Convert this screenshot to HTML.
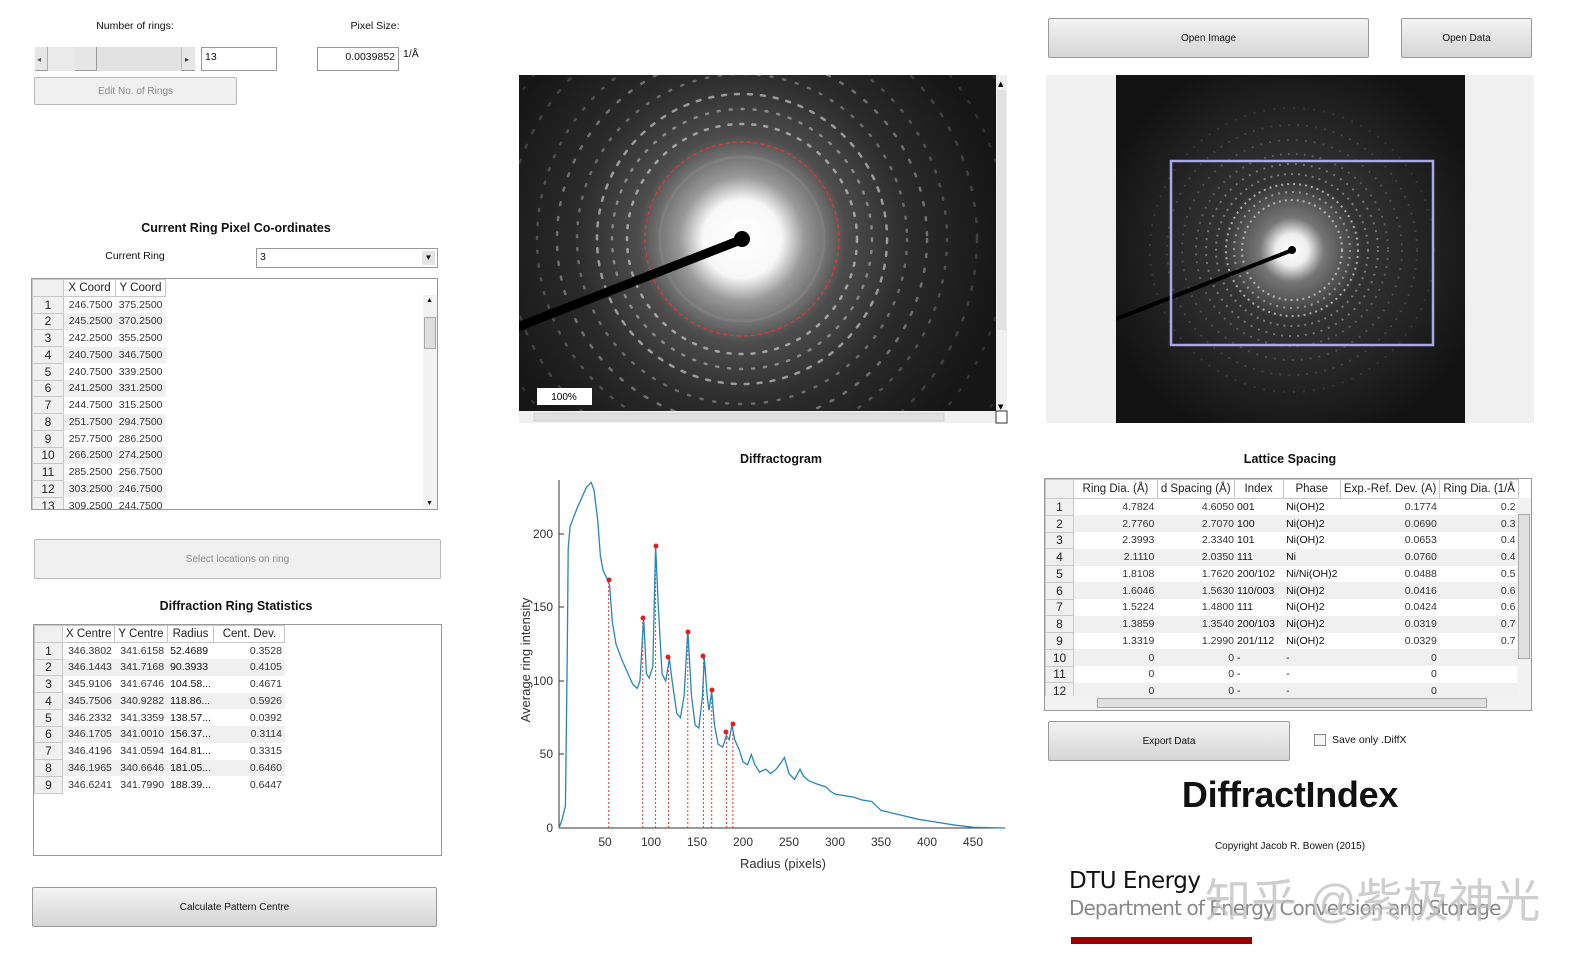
<!DOCTYPE html>
<html><head><meta charset="utf-8"><style>
*{box-sizing:border-box;margin:0;padding:0}
body{width:1593px;height:967px;background:#fff;position:relative;overflow:hidden;font-family:"Liberation Sans",Arial,sans-serif;color:#111}
.a{position:absolute}
.lbl{font-size:10.5px;position:absolute;white-space:nowrap}
.c{transform:translateX(-50%)}
.btn{position:absolute;border:1px solid #9a9a9a;border-radius:2px;background:linear-gradient(#f4f4f4,#e4e4e4 50%,#d6d6d6);font-size:10px;display:flex;align-items:center;justify-content:center;color:#111}
.btn.dis{background:#f0f0f0;color:#8a8a8a;border-color:#b8b8b8}
.box{position:absolute;border:1px solid #9a9a9a;background:#fff;font-size:10.5px;padding:3px 3px}
.title{position:absolute;font-weight:bold;font-size:12.5px;white-space:nowrap;transform:translateX(-50%)}
table{border-collapse:collapse;font-size:10.5px;position:absolute}
td,th{height:16.75px;padding:0 3px;white-space:nowrap;font-weight:normal}
th{background:#fff;border:1px solid #c8c8c8;font-size:11.5px;color:#222}
td.n{background:#f0f0f0;border:1px solid #c8c8c8;text-align:center;font-size:12px;color:#222}
td.r{text-align:right;color:#333}
tr.z td:not(.n){background:#f0f0f0}
.tw{position:absolute;border:1px solid #9a9a9a;background:#fff;overflow:hidden}
</style></head><body>

<div class="lbl c" style="left:135px;top:20px">Number of rings:</div>
<div class="lbl c" style="left:375px;top:20px">Pixel Size:</div>
<div class="a" style="left:35px;top:47px;width:160px;height:24px;background:#e6e6e6;border-bottom:1px solid #999">
 <div class="a" style="left:2px;top:8px;font-size:8px;color:#555">◂</div>
 <div class="a" style="left:12px;top:0;width:28px;height:24px;background:#eaeaea;border-left:1px solid #aaa"></div>
 <div class="a" style="left:61px;top:0;width:86px;height:24px;background:#e2e2e2;border-left:1px solid #999;border-right:1px solid #bbb"></div>
 <div class="a" style="left:150px;top:8px;font-size:8px;color:#333">▸</div>
</div>
<div class="box" style="left:201px;top:47px;width:76px;height:24px">13</div>
<div class="box" style="left:317px;top:47px;width:82px;height:24px;text-align:right">0.0039852</div>
<div class="lbl" style="left:403px;top:48px">1/Å</div>
<div class="btn dis" style="left:34px;top:77px;width:203px;height:28px">Edit No. of Rings</div>

<div class="title" style="left:236px;top:221px">Current Ring Pixel Co-ordinates</div>
<div class="lbl c" style="left:135px;top:250px">Current Ring</div>
<div class="box" style="left:256px;top:248px;width:182px;height:20px;padding:2px 3px">3<span class="a" style="right:2px;top:2px;width:13px;height:14px;background:#e4e4e4;font-size:8px;text-align:center;line-height:14px">▼</span></div>

<div class="tw" style="left:31px;top:278px;width:407px;height:232px">
<table style="left:0;top:0">
<tr><th style="width:31px;background:#f0f0f0"></th><th style="width:52px">X Coord</th><th style="width:50px">Y Coord</th></tr>
<tr><td class="n">1</td><td class="r">246.7500</td><td class="r">375.2500</td></tr>
<tr class="z"><td class="n">2</td><td class="r">245.2500</td><td class="r">370.2500</td></tr>
<tr><td class="n">3</td><td class="r">242.2500</td><td class="r">355.2500</td></tr>
<tr class="z"><td class="n">4</td><td class="r">240.7500</td><td class="r">346.7500</td></tr>
<tr><td class="n">5</td><td class="r">240.7500</td><td class="r">339.2500</td></tr>
<tr class="z"><td class="n">6</td><td class="r">241.2500</td><td class="r">331.2500</td></tr>
<tr><td class="n">7</td><td class="r">244.7500</td><td class="r">315.2500</td></tr>
<tr class="z"><td class="n">8</td><td class="r">251.7500</td><td class="r">294.7500</td></tr>
<tr><td class="n">9</td><td class="r">257.7500</td><td class="r">286.2500</td></tr>
<tr class="z"><td class="n">10</td><td class="r">266.2500</td><td class="r">274.2500</td></tr>
<tr><td class="n">11</td><td class="r">285.2500</td><td class="r">256.7500</td></tr>
<tr class="z"><td class="n">12</td><td class="r">303.2500</td><td class="r">246.7500</td></tr>
<tr><td class="n">13</td><td class="r">309.2500</td><td class="r">244.7500</td></tr>
</table>
<div class="a" style="right:0;top:16px;width:14px;height:214px;background:#f2f2f2"><div class="a" style="left:1px;top:22px;width:12px;height:32px;background:#ddd;border:1px solid #aaa"></div><div class="a" style="left:3px;top:2px;font-size:7px">▲</div><div class="a" style="left:3px;bottom:2px;font-size:7px">▼</div></div>
</div>

<div class="btn dis" style="left:34px;top:539px;width:407px;height:40px">Select locations on ring</div>
<div class="title" style="left:236px;top:599px">Diffraction Ring Statistics</div>
<div class="tw" style="left:33px;top:624px;width:409px;height:232px">
<table style="left:0;top:0">
<tr><th style="width:28px;background:#f0f0f0"></th><th style="width:51px">X Centre</th><th style="width:51px">Y Centre</th><th style="width:42px">Radius</th><th style="width:71px">Cent. Dev.</th></tr>
<tr><td class="n">1</td><td class="r">346.3802</td><td class="r">341.6158</td><td>52.4689</td><td class="r">0.3528</td></tr>
<tr class="z"><td class="n">2</td><td class="r">346.1443</td><td class="r">341.7168</td><td>90.3933</td><td class="r">0.4105</td></tr>
<tr><td class="n">3</td><td class="r">345.9106</td><td class="r">341.6746</td><td>104.58...</td><td class="r">0.4671</td></tr>
<tr class="z"><td class="n">4</td><td class="r">345.7506</td><td class="r">340.9282</td><td>118.86...</td><td class="r">0.5926</td></tr>
<tr><td class="n">5</td><td class="r">346.2332</td><td class="r">341.3359</td><td>138.57...</td><td class="r">0.0392</td></tr>
<tr class="z"><td class="n">6</td><td class="r">346.1705</td><td class="r">341.0010</td><td>156.37...</td><td class="r">0.3114</td></tr>
<tr><td class="n">7</td><td class="r">346.4196</td><td class="r">341.0594</td><td>164.81...</td><td class="r">0.3315</td></tr>
<tr class="z"><td class="n">8</td><td class="r">346.1965</td><td class="r">340.6646</td><td>181.05...</td><td class="r">0.6460</td></tr>
<tr><td class="n">9</td><td class="r">346.6241</td><td class="r">341.7990</td><td>188.39...</td><td class="r">0.6447</td></tr>
</table></div>
<div class="btn" style="left:32px;top:887px;width:405px;height:40px">Calculate Pattern Centre</div>

<!-- image 1 -->
<svg class="a" style="left:519px;top:75px" width="489" height="349" viewBox="519 75 489 349">
<defs><radialGradient id="g1" cx="742" cy="239" r="260" gradientUnits="userSpaceOnUse">
<stop offset="0" stop-color="#fff"/><stop offset="0.15" stop-color="#f8f8f8"/><stop offset="0.24" stop-color="#999"/><stop offset="0.4" stop-color="#4c4c4c"/><stop offset="0.65" stop-color="#2a2a2a"/><stop offset="1" stop-color="#161616"/></radialGradient>
<clipPath id="c1"><rect x="519" y="75" width="477" height="336"/></clipPath></defs>
<rect x="519" y="75" width="477" height="336" fill="url(#g1)"/>
<g clip-path="url(#c1)" fill="none" stroke-linecap="round">
<circle cx="742" cy="239" r="82" stroke="#888" stroke-width="3" opacity=".5"/>
<circle cx="742" cy="239" r="115" stroke="#ccc" stroke-width="2.5" stroke-dasharray="3 9" opacity=".7"/>
<circle cx="742" cy="239" r="130" stroke="#bbb" stroke-width="2.5" stroke-dasharray="2 10" opacity=".6"/>
<circle cx="742" cy="239" r="145" stroke="#ddd" stroke-width="2.5" stroke-dasharray="4 9" opacity=".6"/>
<circle cx="742" cy="239" r="165" stroke="#aaa" stroke-width="2.5" stroke-dasharray="2 11" opacity=".5"/>
<circle cx="742" cy="239" r="185" stroke="#ccc" stroke-width="2.5" stroke-dasharray="3 12" opacity=".45"/>
<circle cx="742" cy="239" r="205" stroke="#999" stroke-width="2.5" stroke-dasharray="2 12" opacity=".4"/>
<circle cx="742" cy="239" r="235" stroke="#888" stroke-width="2.5" stroke-dasharray="3 13" opacity=".35"/>
<circle cx="742" cy="239" r="265" stroke="#777" stroke-width="2.5" stroke-dasharray="2 14" opacity=".3"/>
<circle cx="742" cy="239" r="300" stroke="#666" stroke-width="2.5" stroke-dasharray="2 14" opacity=".3"/>
<circle cx="742" cy="239" r="97" stroke="#e33" stroke-width="1.2" stroke-dasharray="3 4"/>
<line x1="515" y1="328" x2="738" y2="241" stroke="#000" stroke-width="9"/>
<circle cx="742" cy="239" r="8" fill="#000"/>
</g>
<rect x="537" y="388" width="55" height="17" fill="#fff"/>
<text x="564" y="400" font-size="10" text-anchor="middle" font-family="Liberation Sans">100%</text>
<rect x="996" y="75" width="11" height="336" fill="#f0f0f0"/>
<rect x="997" y="90" width="9" height="240" fill="#e2e2e2"/>
<text x="998" y="86" font-size="7" font-family="DejaVu Sans">▲</text>
<text x="998" y="409" font-size="7" font-family="DejaVu Sans">▼</text>
<rect x="519" y="411" width="488" height="12" fill="#f0f0f0"/>
<rect x="534" y="413" width="410" height="8" fill="#e0e0e0" stroke="#bbb" stroke-width=".5"/>
<rect x="996" y="411" width="11" height="12" fill="#fff" stroke="#333"/>
</svg>

<div class="title" style="left:781px;top:452px">Diffractogram</div>
<svg class="a" style="left:500px;top:460px" width="510" height="420" viewBox="500 460 510 420">
<g font-family="Liberation Sans" font-size="12" fill="#333">
<line x1="559" y1="480" x2="559" y2="828" stroke="#333"/>
<line x1="559" y1="828" x2="1005" y2="828" stroke="#333"/>
<g stroke="#333">
<line x1="559" y1="534" x2="564" y2="534"/><line x1="559" y1="607" x2="564" y2="607"/><line x1="559" y1="681" x2="564" y2="681"/><line x1="559" y1="754" x2="564" y2="754"/>
</g>
<text x="553" y="538" text-anchor="end">200</text><text x="553" y="611" text-anchor="end">150</text><text x="553" y="685" text-anchor="end">100</text><text x="553" y="758" text-anchor="end">50</text><text x="553" y="832" text-anchor="end">0</text>
<text x="605" y="846" text-anchor="middle">50</text><text x="651" y="846" text-anchor="middle">100</text><text x="697" y="846" text-anchor="middle">150</text><text x="743" y="846" text-anchor="middle">200</text><text x="789" y="846" text-anchor="middle">250</text><text x="835" y="846" text-anchor="middle">300</text><text x="881" y="846" text-anchor="middle">350</text><text x="927" y="846" text-anchor="middle">400</text><text x="973" y="846" text-anchor="middle">450</text>
<text x="783" y="868" text-anchor="middle" font-size="13">Radius (pixels)</text>
<text x="0" y="0" text-anchor="middle" font-size="13" transform="translate(530 660) rotate(-90)">Average ring intensity</text>
</g>
<g transform="translate(559 828) scale(0.92 -1.47)">
<g stroke="#e33" stroke-width="1" stroke-dasharray="2 2">
<line x1="54" y1="0" x2="54" y2="169" vector-effect="non-scaling-stroke"/><line x1="91" y1="0" x2="91" y2="143" vector-effect="non-scaling-stroke"/><line x1="105" y1="0" x2="105" y2="192" vector-effect="non-scaling-stroke"/><line x1="119" y1="0" x2="119" y2="116" vector-effect="non-scaling-stroke"/><line x1="140" y1="0" x2="140" y2="133" vector-effect="non-scaling-stroke"/><line x1="157" y1="0" x2="157" y2="117" vector-effect="non-scaling-stroke"/><line x1="166" y1="0" x2="166" y2="94" vector-effect="non-scaling-stroke"/><line x1="182" y1="0" x2="182" y2="65" vector-effect="non-scaling-stroke"/><line x1="189" y1="0" x2="189" y2="71" vector-effect="non-scaling-stroke"/>
</g>
<polyline fill="none" stroke="#2a86b8" stroke-width="1.3" vector-effect="non-scaling-stroke" points="0,0 3,5 7,15 9,120 10,190 12,205 15,210 20,218 25,225 30,232 35,235 38,230 42,210 45,185 48,175 52,170 55,165 58,140 62,125 68,115 75,105 80,98 85,95 88,100 92,143 95,105 98,102 102,110 105,192 108,150 112,105 116,100 120,115 123,100 128,78 132,75 136,90 140,135 144,90 148,70 152,68 156,90 158,116 161,90 163,80 166,93 169,70 173,57 178,55 182,63 185,60 188,70 191,60 196,53 200,45 205,43 209,50 213,43 218,38 225,40 230,37 236,40 242,45 245,48 250,37 256,33 262,40 266,35 272,32 280,30 290,28 295,25 300,23 320,21 330,19 340,18 345,15 350,12 370,9 390,6 410,4 430,2 450,0.5 485,0"/>
</g>
<g fill="#d22">
<circle cx="609" cy="580" r="2.5"/><circle cx="643" cy="618" r="2.5"/><circle cx="656" cy="546" r="2.5"/><circle cx="668" cy="657" r="2.5"/><circle cx="688" cy="632" r="2.5"/><circle cx="703" cy="656" r="2.5"/><circle cx="712" cy="690" r="2.5"/><circle cx="726" cy="732" r="2.5"/><circle cx="733" cy="724" r="2.5"/>
</g>
</svg>

<div class="btn" style="left:1048px;top:18px;width:321px;height:40px">Open Image</div>
<div class="btn" style="left:1401px;top:18px;width:131px;height:40px">Open Data</div>
<div class="a" style="left:1046px;top:75px;width:488px;height:348px;background:#f0f0f0"></div>
<svg class="a" style="left:1116px;top:75px" width="349" height="348" viewBox="1116 75 349 348">
<defs><radialGradient id="g2" cx="1292" cy="250" r="200" gradientUnits="userSpaceOnUse">
<stop offset="0" stop-color="#fff"/><stop offset="0.08" stop-color="#eee"/><stop offset="0.16" stop-color="#777"/><stop offset="0.35" stop-color="#333"/><stop offset="1" stop-color="#121212"/></radialGradient></defs>
<rect x="1116" y="75" width="349" height="348" fill="url(#g2)"/>
<g fill="none">
<circle cx="1292" cy="250" r="50" stroke="#ccc" stroke-width="2" stroke-dasharray="2 4" opacity=".8"/>
<circle cx="1292" cy="250" r="58" stroke="#bbb" stroke-width="2" stroke-dasharray="2 5" opacity=".7"/>
<circle cx="1292" cy="250" r="66" stroke="#ddd" stroke-width="2" stroke-dasharray="2 4" opacity=".7"/>
<circle cx="1292" cy="250" r="76" stroke="#aaa" stroke-width="2" stroke-dasharray="2 5" opacity=".6"/>
<circle cx="1292" cy="250" r="86" stroke="#bbb" stroke-width="2" stroke-dasharray="2 6" opacity=".5"/>
<circle cx="1292" cy="250" r="96" stroke="#999" stroke-width="2" stroke-dasharray="2 6" opacity=".45"/>
<circle cx="1292" cy="250" r="110" stroke="#888" stroke-width="2" stroke-dasharray="2 7" opacity=".4"/>
<circle cx="1292" cy="250" r="125" stroke="#777" stroke-width="2" stroke-dasharray="2 7" opacity=".35"/>
<circle cx="1292" cy="250" r="142" stroke="#666" stroke-width="2" stroke-dasharray="2 8" opacity=".3"/>
<line x1="1116" y1="319" x2="1290" y2="251" stroke="#000" stroke-width="4"/>
<circle cx="1292" cy="250" r="4" fill="#000"/>
<rect x="1171" y="161" width="262" height="184" stroke="#a8a8e8" stroke-width="2.5"/>
</g></svg>

<div class="title" style="left:1290px;top:452px">Lattice Spacing</div>
<div class="tw" style="left:1044px;top:478px;width:488px;height:233px">
<table style="left:0;top:0;width:474px">
<tr><th style="width:31px;background:#f0f0f0;height:19px"></th><th style="width:88px">Ring Dia. (Å)</th><th style="width:76px">d Spacing (Å)</th><th style="width:51px">Index</th><th style="width:55px">Phase</th><th style="width:95px">Exp.-Ref. Dev. (A)</th><th style="width:78px;text-align:left">Ring Dia. (1/Å</th></tr>
<tr><td class="n">1</td><td class="r">4.7824</td><td class="r" style="padding-right:0">4.6050</td><td>001</td><td>Ni(OH)2</td><td class="r">0.1774</td><td class="r">0.2</td></tr>
<tr class="z"><td class="n">2</td><td class="r">2.7760</td><td class="r" style="padding-right:0">2.7070</td><td>100</td><td>Ni(OH)2</td><td class="r">0.0690</td><td class="r">0.3</td></tr>
<tr><td class="n">3</td><td class="r">2.3993</td><td class="r" style="padding-right:0">2.3340</td><td>101</td><td>Ni(OH)2</td><td class="r">0.0653</td><td class="r">0.4</td></tr>
<tr class="z"><td class="n">4</td><td class="r">2.1110</td><td class="r" style="padding-right:0">2.0350</td><td>111</td><td>Ni</td><td class="r">0.0760</td><td class="r">0.4</td></tr>
<tr><td class="n">5</td><td class="r">1.8108</td><td class="r" style="padding-right:0">1.7620</td><td>200/102</td><td>Ni/Ni(OH)2</td><td class="r">0.0488</td><td class="r">0.5</td></tr>
<tr class="z"><td class="n">6</td><td class="r">1.6046</td><td class="r" style="padding-right:0">1.5630</td><td>110/003</td><td>Ni(OH)2</td><td class="r">0.0416</td><td class="r">0.6</td></tr>
<tr><td class="n">7</td><td class="r">1.5224</td><td class="r" style="padding-right:0">1.4800</td><td>111</td><td>Ni(OH)2</td><td class="r">0.0424</td><td class="r">0.6</td></tr>
<tr class="z"><td class="n">8</td><td class="r">1.3859</td><td class="r" style="padding-right:0">1.3540</td><td>200/103</td><td>Ni(OH)2</td><td class="r">0.0319</td><td class="r">0.7</td></tr>
<tr><td class="n">9</td><td class="r">1.3319</td><td class="r" style="padding-right:0">1.2990</td><td>201/112</td><td>Ni(OH)2</td><td class="r">0.0329</td><td class="r">0.7</td></tr>
<tr class="z"><td class="n">10</td><td class="r">0</td><td class="r" style="padding-right:0">0</td><td>-</td><td>-</td><td class="r">0</td><td></td></tr>
<tr><td class="n">11</td><td class="r">0</td><td class="r" style="padding-right:0">0</td><td>-</td><td>-</td><td class="r">0</td><td></td></tr>
<tr class="z"><td class="n">12</td><td class="r">0</td><td class="r" style="padding-right:0">0</td><td>-</td><td>-</td><td class="r">0</td><td></td></tr>
</table>
<div class="a" style="right:0;top:19px;width:14px;height:200px;background:#f2f2f2"><div class="a" style="left:1px;top:16px;width:12px;height:145px;background:#e0e0e0;border:1px solid #aaa"></div></div>
<div class="a" style="left:0;bottom:0;width:488px;height:14px;background:#f2f2f2"><div class="a" style="left:52px;top:2px;width:390px;height:10px;background:#e0e0e0;border:1px solid #aaa"></div></div>
</div>

<div class="btn" style="left:1048px;top:721px;width:242px;height:40px">Export Data</div>
<div class="a" style="left:1314px;top:734px;width:12px;height:12px;border:1px solid #888;background:#f6f6f6"></div>
<div class="lbl" style="left:1332px;top:734px">Save only .DiffX</div>
<div class="a" style="left:1290px;top:774px;transform:translateX(-50%);font-weight:bold;font-size:36px;letter-spacing:-0.3px;white-space:nowrap">DiffractIndex</div>
<div class="lbl c" style="left:1290px;top:841px;font-size:10px">Copyright Jacob R. Bowen (2015)</div>
<div class="a" style="left:1069px;top:868px;font-size:23px;white-space:nowrap;font-family:'DejaVu Sans',sans-serif;letter-spacing:-0.5px">DTU Energy</div>
<div class="a" style="left:1069px;top:896px;font-size:20px;color:#888;white-space:nowrap;font-family:'DejaVu Sans',sans-serif;letter-spacing:-0.9px">Department of Energy Conversion and Storage</div>
<div class="a" style="left:1205px;top:865px;font-size:46px;color:rgba(190,190,190,.75);white-space:nowrap;font-family:'Liberation Sans','Noto Sans CJK SC',sans-serif">知乎 @紫极神光</div>
<div class="a" style="left:1071px;top:937px;width:181px;height:7px;background:#990000"></div>
</body></html>
